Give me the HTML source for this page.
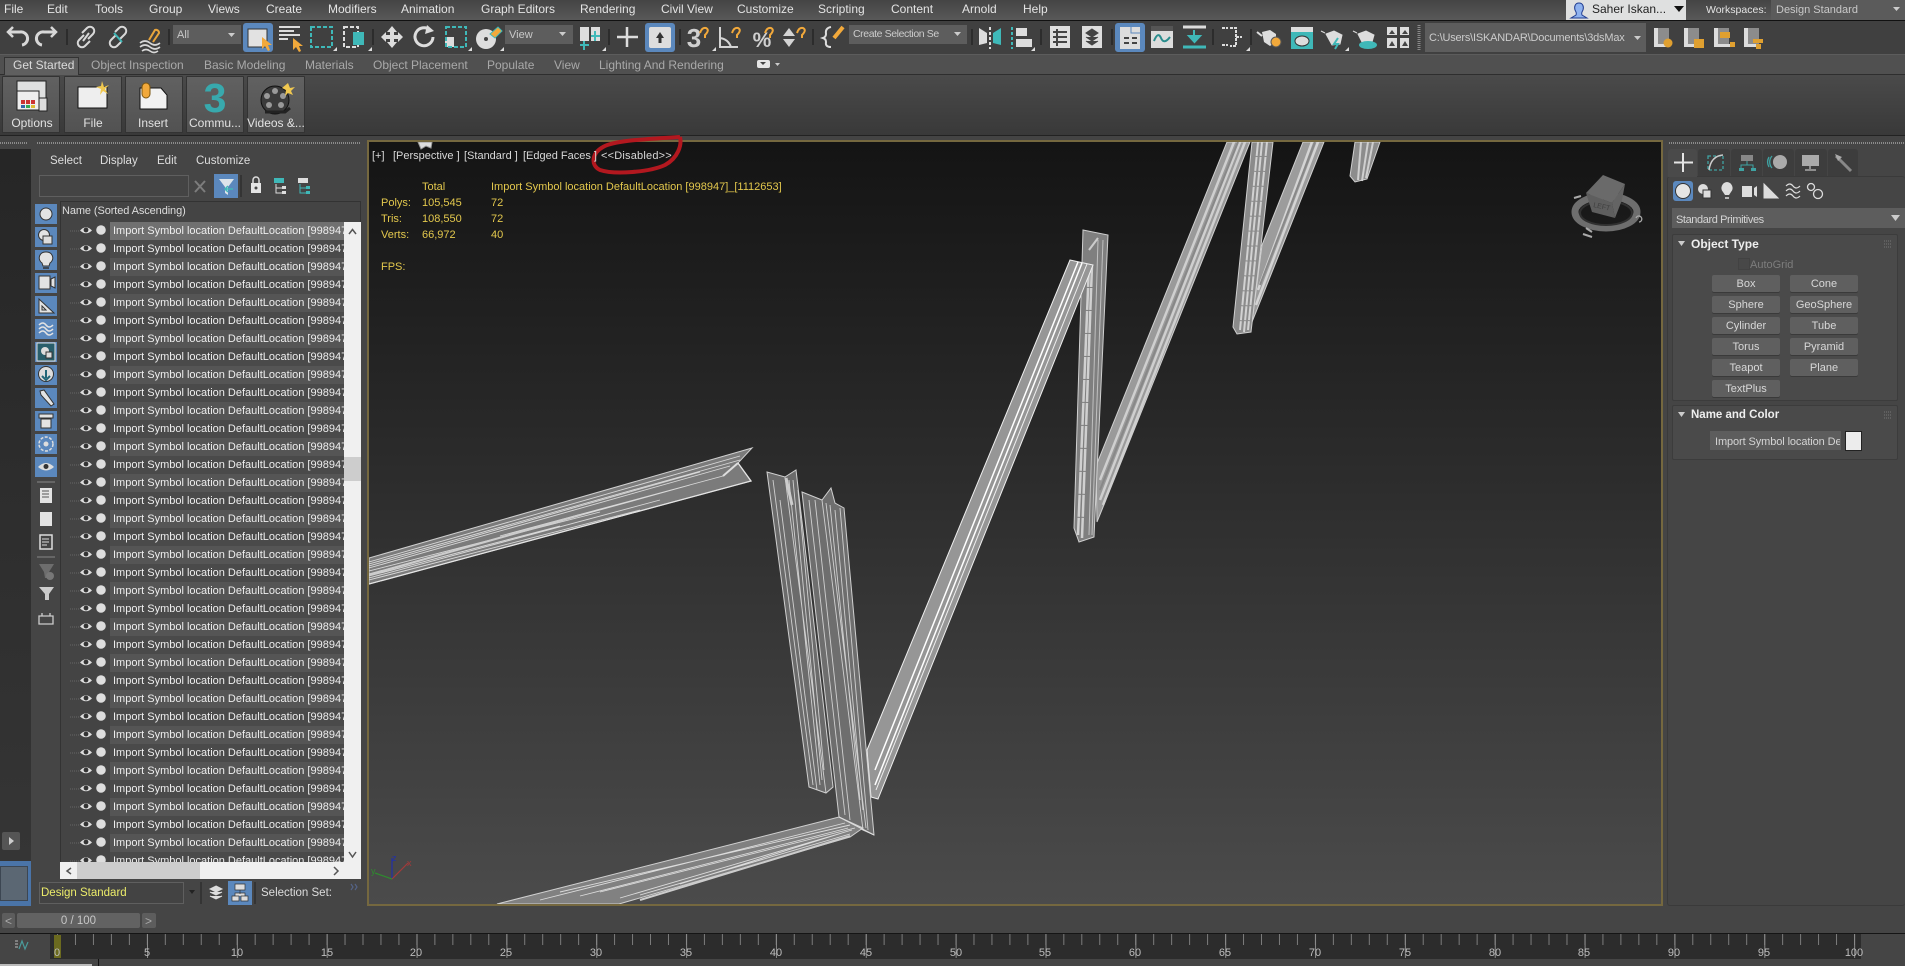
<!DOCTYPE html>
<html><head><meta charset="utf-8"><title>3ds Max</title>
<style>
html,body{margin:0;padding:0;width:1905px;height:966px;overflow:hidden;background:#454545}
body{position:relative;font-family:"Liberation Sans",sans-serif;font-size:12px;color:#ddd}
.b,.t{position:absolute}
.t{white-space:nowrap;line-height:14px}
.m .t{color:#e4e4e4;top:2px}
.rt .t{color:#a9a9a9;top:58px}
.rb{position:absolute;top:76px;width:58px;height:57px;background:linear-gradient(#616161,#525252);border:1px solid #333;box-sizing:border-box;border-radius:1px}
.rl{color:#e2e2e2;top:116px;width:60px;text-align:center}
.dd{position:absolute;background:#5d5d5d;color:#c9c9c9}
.y .t{color:#e3c84d;font-size:11px}
.v .t{color:#d8d8d8;font-size:11px;top:149px}
.btn{position:absolute;width:68px;height:17px;background:#5f5f5f;border-radius:2px;color:#d8d8d8;font-size:11px;line-height:18px;text-align:center;box-shadow:0 1px 0 #3a3a3a}
#list{position:absolute;left:110px;top:222px;width:234px;height:640px;overflow:hidden;font-size:11px;color:#eee;line-height:19px}
#list div{height:18px;padding-left:3px;white-space:nowrap;background:#4a4a4a;overflow:hidden}
#list div:nth-child(odd){background:#555}
#list div:first-child{background:#707070}
</style></head><body>
<!-- backgrounds -->
<div class="b" style="left:0;top:0;width:1905px;height:20px;background:linear-gradient(#444,#585858)"></div>
<div class="b" style="left:0;top:20px;width:1905px;height:1px;background:#111"></div>
<div class="b" style="left:0;top:21px;width:1905px;height:34px;background:#404040;border-bottom:1px solid #5c5c5c;box-sizing:border-box"></div>
<div class="b" style="left:0;top:55px;width:1905px;height:20px;background:#505050;border-bottom:1px solid #2e2e2e;box-sizing:border-box"></div>
<div class="b" style="left:0;top:75px;width:1905px;height:60px;background:linear-gradient(#4a4a4a,#393939)"></div>
<div class="b" style="left:0;top:135px;width:1905px;height:1px;background:#222"></div>
<div class="b" style="left:0;top:136px;width:1905px;height:4px;background:#444"></div>
<div class="b" style="left:4px;top:57px;width:75px;height:18px;background:#5f5f5f;border:1px solid #333;border-bottom:0;box-sizing:border-box"></div>
<div class="rb" style="left:2px"></div><div class="rb" style="left:64px"></div><div class="rb" style="left:125px"></div><div class="rb" style="left:186px"></div><div class="rb" style="left:247px"></div>
<div class="b" style="left:0;top:149px;width:31px;height:712px;background:linear-gradient(#262626,#353535)"></div>
<div class="b" style="left:0;top:861px;width:31px;height:45px;background:#4a74a8"></div>
<div class="b" style="left:0;top:866px;width:28px;height:35px;background:#5b6773;border:1px solid #3c4652;box-sizing:border-box"></div>
<div class="b" style="left:2px;top:832px;width:18px;height:18px;background:#555;border-radius:2px"></div>
<div class="b" style="left:39px;top:175px;width:150px;height:22px;border:1px solid #5f5f5f;box-sizing:border-box;background:#444"></div>
<div class="b" style="left:214px;top:174px;width:24px;height:24px;background:#5b88bd"></div>
<div class="b" style="left:60px;top:201px;width:301px;height:21px;background:#444;border:1px solid #333;border-bottom:0;box-sizing:border-box"></div>
<div class="b" style="left:60px;top:222px;width:50px;height:640px;background:#444;border-left:1px solid #333;box-sizing:border-box"></div>
<div class="b" style="left:344px;top:222px;width:17px;height:640px;background:#f0f0f0"></div>
<div class="b" style="left:344px;top:457px;width:17px;height:24px;background:#cdcdcd"></div>
<div class="b" style="left:60px;top:862px;width:301px;height:17px;background:#f0f0f0"></div>
<div class="b" style="left:77px;top:862px;width:123px;height:17px;background:#cdcdcd"></div>
<div id="list">
<div>Import Symbol location DefaultLocation [998947]_[1112653]</div><div>Import Symbol location DefaultLocation [998947]_[1112653]</div><div>Import Symbol location DefaultLocation [998947]_[1112653]</div><div>Import Symbol location DefaultLocation [998947]_[1112653]</div><div>Import Symbol location DefaultLocation [998947]_[1112653]</div><div>Import Symbol location DefaultLocation [998947]_[1112653]</div>
<div>Import Symbol location DefaultLocation [998947]_[1112653]</div><div>Import Symbol location DefaultLocation [998947]_[1112653]</div><div>Import Symbol location DefaultLocation [998947]_[1112653]</div><div>Import Symbol location DefaultLocation [998947]_[1112653]</div><div>Import Symbol location DefaultLocation [998947]_[1112653]</div><div>Import Symbol location DefaultLocation [998947]_[1112653]</div>
<div>Import Symbol location DefaultLocation [998947]_[1112653]</div><div>Import Symbol location DefaultLocation [998947]_[1112653]</div><div>Import Symbol location DefaultLocation [998947]_[1112653]</div><div>Import Symbol location DefaultLocation [998947]_[1112653]</div><div>Import Symbol location DefaultLocation [998947]_[1112653]</div><div>Import Symbol location DefaultLocation [998947]_[1112653]</div>
<div>Import Symbol location DefaultLocation [998947]_[1112653]</div><div>Import Symbol location DefaultLocation [998947]_[1112653]</div><div>Import Symbol location DefaultLocation [998947]_[1112653]</div><div>Import Symbol location DefaultLocation [998947]_[1112653]</div><div>Import Symbol location DefaultLocation [998947]_[1112653]</div><div>Import Symbol location DefaultLocation [998947]_[1112653]</div>
<div>Import Symbol location DefaultLocation [998947]_[1112653]</div><div>Import Symbol location DefaultLocation [998947]_[1112653]</div><div>Import Symbol location DefaultLocation [998947]_[1112653]</div><div>Import Symbol location DefaultLocation [998947]_[1112653]</div><div>Import Symbol location DefaultLocation [998947]_[1112653]</div><div>Import Symbol location DefaultLocation [998947]_[1112653]</div>
<div>Import Symbol location DefaultLocation [998947]_[1112653]</div><div>Import Symbol location DefaultLocation [998947]_[1112653]</div><div>Import Symbol location DefaultLocation [998947]_[1112653]</div><div>Import Symbol location DefaultLocation [998947]_[1112653]</div><div>Import Symbol location DefaultLocation [998947]_[1112653]</div><div>Import Symbol location DefaultLocation [998947]_[1112653]</div>
</div>
<!-- viewport -->
<div class="b" style="left:367px;top:140px;width:1296px;height:766px;box-sizing:border-box;border:2px solid #75683f;background:linear-gradient(#141414,#4b4b4b)"></div>
<!-- bottom controls -->
<div class="b" style="left:39px;top:882px;width:145px;height:22px;border:1px solid #5f5f5f;box-sizing:border-box;background:#434343"></div>
<div class="b" style="left:228px;top:881px;width:24px;height:24px;background:#5b88bd"></div>
<div class="b" style="left:2px;top:913px;width:13px;height:15px;background:#5d5d5d;border-radius:2px"></div>
<div class="b" style="left:17px;top:913px;width:123px;height:15px;background:#626262;border-radius:2px"></div>
<div class="b" style="left:142px;top:913px;width:14px;height:15px;background:#5d5d5d;border-radius:2px"></div>
<div class="b" style="left:0;top:933px;width:1905px;height:1px;background:#151515"></div>
<div class="b" style="left:50px;top:934px;width:1811px;height:25px;background:#2c2c2c"></div>
<div class="b" style="left:0;top:964px;width:92px;height:2px;background:#bbb"></div>
<div class="b" style="left:98px;top:959px;width:1px;height:7px;background:#111"></div>
<!-- dropdowns -->
<div class="dd" style="left:173px;top:25px;width:68px;height:19px"></div>
<div class="dd" style="left:505px;top:25px;width:68px;height:19px"></div>
<div class="dd" style="left:849px;top:25px;width:118px;height:19px"></div>
<div class="dd" style="left:1425px;top:23px;width:221px;height:29px"></div>
<div class="b" style="left:243px;top:23px;width:30px;height:29px;background:#5b88bd;border-radius:3px"></div>
<div class="b" style="left:645px;top:23px;width:30px;height:29px;background:#5b88bd;border-radius:3px"></div>
<div class="b" style="left:649px;top:27px;width:22px;height:21px;background:#ddd;border-radius:2px"></div>
<div class="b" style="left:1115px;top:23px;width:30px;height:29px;background:#5b88bd;border-radius:3px"></div>
<div class="b" style="left:1566px;top:0;width:120px;height:20px;background:#dfe0e0"></div>
<div class="b" style="left:1771px;top:0;width:134px;height:20px;background:#5b5b5b"></div>
<!-- command panel -->
<div class="b" style="left:1667px;top:176px;width:238px;height:730px;border:1px solid #3a3a3a;border-right:0;border-radius:3px;box-sizing:border-box;background:#454545"></div>
<div class="b" style="left:1668px;top:149px;width:29px;height:28px;background:#4a4a4a;border-radius:3px 3px 0 0"></div>
<div class="b" style="left:1698px;top:149px;width:32px;height:27px;background:#3d3d3d;border-radius:3px 3px 0 0"></div>
<div class="b" style="left:1731px;top:149px;width:31px;height:27px;background:#3d3d3d;border-radius:3px 3px 0 0"></div>
<div class="b" style="left:1763px;top:149px;width:31px;height:27px;background:#3d3d3d;border-radius:3px 3px 0 0"></div>
<div class="b" style="left:1795px;top:149px;width:32px;height:27px;background:#3d3d3d;border-radius:3px 3px 0 0"></div>
<div class="b" style="left:1828px;top:149px;width:30px;height:27px;background:#3d3d3d;border-radius:3px 3px 0 0"></div>
<div class="b" style="left:1673px;top:181px;width:20px;height:20px;background:#5b88bd;border-radius:3px"></div>
<div class="dd" style="left:1672px;top:208px;width:233px;height:20px"></div>
<div class="b" style="left:1672px;top:234px;width:226px;height:167px;background:#4a4a4a;border:1px solid #3c3c3c;box-sizing:border-box;border-radius:2px"></div>
<div class="b" style="left:1672px;top:405px;width:226px;height:55px;background:#4a4a4a;border:1px solid #3c3c3c;box-sizing:border-box;border-radius:2px"></div>
<div class="b" style="left:1738px;top:258px;width:10px;height:10px;background:#484848;border:1px solid #424242"></div>
<div class="dd" style="left:1710px;top:431px;width:131px;height:19px"></div>
<div class="b" style="left:1845px;top:431px;width:17px;height:20px;background:#ececec;border:1px solid #222;box-sizing:border-box"></div>

<svg class="b" style="left:0;top:0" width="1905" height="966" viewBox="0 0 1905 966" fill="none">
<defs>
<clipPath id="vp"><rect x="369" y="142" width="1292" height="762"/></clipPath>
<pattern id="pr" patternUnits="userSpaceOnUse" x="60" y="222" width="50" height="18">
<path d="M10 9h9" stroke="#666" stroke-dasharray="1 1"/>
<path d="M20 8.5Q26 2 32 8.5Q26 14 20 8.5Z" fill="#ddd"/><circle cx="26" cy="8" r="2.4" fill="#333"/><circle cx="41" cy="8" r="4.8" fill="#ddd"/>
</pattern>
</defs>
<rect x="61" y="222" width="49" height="640" fill="url(#pr)"/>
<!-- dotted grips -->
<g stroke="#8a8a8a" stroke-width="2" stroke-dasharray="1 1"><path d="M0 143H28M37 143H360M1669 143H1905"/><path d="M1419 25V50" stroke-width="3"/></g>
<!-- toolbar icons -->
<g stroke="#d8d8d8" stroke-width="3">
<path d="M9 32H20A6.5 6.5 0 0 1 22 45"/><path d="M13 27L8 32L13 37" stroke-width="2.5"/>
<path d="M55 32H44A6.5 6.5 0 0 0 42 45"/><path d="M51 27L56 32L51 37" stroke-width="2.5"/>
<g stroke-width="2"><path d="M84 35L79 40A4 4 0 0 0 85 46L90 41M88 39L93 34A4 4 0 0 0 87 28L82 33M83 41L89 33"/></g>
<g stroke-width="2"><path d="M116 35L111 40A4 4 0 0 0 117 46L121 42M120 39L125 34A4 4 0 0 0 119 28L115 32"/><path d="M114 33L122 42" stroke="#3fb8b8"/></g>
<g stroke-width="1.6"><path d="M140 43Q145 39 150 43T160 43M140 47Q145 43 150 47T160 47M142 51Q146 48 150 51T158 51"/><path d="M149 40L155 30A3 3 0 0 1 159 33L153 42" stroke="#e8a53c" stroke-width="2"/></g>
</g>
<path d="M67 29V45M169 29V45M373 29V45M609 29V45M680 29V45M813 29V45M972 29V45M1041 29V45M1112 29V45M1213 29V45M1251 29V45" stroke="#181818"/>
<!-- select -->
<rect x="248" y="29" width="19" height="18" fill="#e2e2e2" stroke="#333"/>
<path d="M262 37L262 49L265 46L268 51L270 50L268 45L272 45Z" fill="#f2a93b"/>
<path d="M279 27H300M279 31H294M279 35H300M279 39H288" stroke="#ddd" stroke-width="2"/><path d="M293 38V50L296 47L299 52L301 51L299 46L303 46Z" fill="#f2a93b"/>
<rect x="311" y="27" width="21" height="20" stroke="#3fb8b8" stroke-width="2" stroke-dasharray="4 2"/>
<rect x="344" y="27" width="14" height="20" stroke="#ddd" stroke-width="2" stroke-dasharray="4 2"/><rect x="353" y="32" width="11" height="13" fill="#3fb8b8"/>
<path d="M392 26L397 32H394V35H398V32L403 37L398 42V39H394V42H397L392 48L387 42H390V39H386V42L381 37L386 32V35H390V32H387Z" fill="#ddd"/>
<path d="M430 30A9 9 0 1 0 433 37" stroke="#ddd" stroke-width="3"/><path d="M427 25L434 31L425 34Z" fill="#ddd"/>
<rect x="445" y="37" width="9" height="10" fill="#ddd"/><rect x="446" y="27" width="20" height="20" stroke="#3fb8b8" stroke-width="2" stroke-dasharray="4 2"/>
<circle cx="486" cy="39" r="10" fill="#ddd"/><circle cx="486" cy="39" r="2" fill="#444"/><path d="M490 34L498 27L502 31L495 38Z" fill="#f2a93b" stroke="#3fb8b8"/>
<rect x="580" y="27" width="9" height="14" fill="#ddd"/><path d="M584 41V50M580 45H589" stroke="#3fb8b8" stroke-width="2"/><rect x="591" y="27" width="9" height="14" fill="#ddd"/><path d="M595 31V41M591 36H600" stroke="#3fb8b8" stroke-width="2"/>
<path d="M617 37H638M627 27V47" stroke="#ddd" stroke-width="2.5"/>
<path d="M656 38L660 32L664 38H661.5V43H658.5V38Z" fill="#333"/>
<text x="694" y="47" font-family="Liberation Sans" font-weight="700" font-size="26" text-anchor="middle" fill="#cfcfcf">3</text>
<text x="762" y="47" font-family="Liberation Sans" font-weight="700" font-size="21" text-anchor="middle" fill="#cfcfcf">%</text>
<g stroke="#f2a93b" stroke-width="2"><path d="M700 33Q702 27 706 28Q710 30 705 35V38M732 33Q734 27 738 28Q742 30 737 35V38M765 33Q767 27 771 28Q775 30 770 35V38M797 33Q799 27 803 28Q807 30 802 35V38"/></g>
<path d="M720 27V47H738M720 38Q728 39 731 47" stroke="#d4d4d4" stroke-width="2"/>
<path d="M789 28L795 36H783ZM789 47L795 39H783Z" fill="#d4d4d4"/>
<path d="M831 27Q825 28 826 34Q826 37 823 38Q826 39 826 42Q825 47 831 47" stroke="#ddd" stroke-width="2"/><path d="M834 38L843 27" stroke="#f2a93b" stroke-width="4"/>
<path d="M990 27V49" stroke="#ddd" stroke-width="2" stroke-dasharray="3 2"/><path d="M979 28L987 33V43L979 45Z" fill="#ddd"/><path d="M1001 28L993 33V43L1001 45Z" fill="#3fb8b8"/>
<path d="M1012 27V49" stroke="#3fb8b8" stroke-width="2" stroke-dasharray="3 2"/><rect x="1016" y="28" width="11" height="8" fill="#ddd"/><rect x="1016" y="39" width="16" height="8" fill="#ddd"/>
<rect x="1050" y="26" width="20" height="22" fill="#ddd"/><path d="M1053 32H1067M1053 37H1067M1053 42H1067M1057 29V46" stroke="#444" stroke-width="2"/>
<rect x="1082" y="26" width="20" height="22" fill="#ddd"/><path d="M1092 29L1098 33L1092 37L1086 33ZM1086 37L1092 41L1098 37M1086 41L1092 45L1098 41" fill="#444" stroke="#444"/>
<rect x="1120" y="27" width="20" height="22" fill="#ddd"/><path d="M1124 38H1129M1132 38H1137M1124 43H1129M1132 43H1137" stroke="#444" stroke-width="2"/><path d="M1131 27V33H1140" stroke="#5b88bd"/>
<rect x="1151" y="26" width="22" height="22" fill="#ddd"/><rect x="1151" y="26" width="22" height="5" fill="#555"/><path d="M1154 41Q1158 31 1161 38T1170 37" stroke="#2a8d8d" stroke-width="2"/>
<path d="M1183 47H1206" stroke="#3fb8b8" stroke-width="3"/><path d="M1194 30V38M1189 36H1200L1194.5 42Z" stroke="#3fb8b8" fill="#3fb8b8" stroke-width="2"/><path d="M1183 27H1206" stroke="#ddd" stroke-width="3"/>
<path d="M1222 28H1228M1222 45H1228M1236 37H1242M1230 28H1236V46H1230" stroke="#ddd" stroke-width="2" stroke-dasharray="3 1"/>
<!-- teapots -->
<g><path d="M1262 32L1270 30L1276 34V42L1270 46L1264 42Z" fill="#ddd"/><path d="M1262 36L1257 32" stroke="#ddd" stroke-width="2"/><circle cx="1276" cy="42" r="5" fill="#f2a93b" stroke="#555"/></g>
<rect x="1291" y="27" width="22" height="22" fill="#3fb8b8"/><rect x="1291" y="27" width="22" height="5" fill="#ddd"/><ellipse cx="1302" cy="41" rx="7" ry="5" fill="#ddd" stroke="#333"/>
<path d="M1326 34L1334 31L1342 35L1340 44L1332 45Z M1325 33L1321 31" fill="#ddd" stroke="#ddd"/><path d="M1338 38L1334 44H1338L1335 49" stroke="#3fb8b8" stroke-width="2"/>
<path d="M1358 34L1366 31L1374 35L1372 42L1362 42Z M1357 33L1353 31" fill="#ddd" stroke="#ddd"/><ellipse cx="1368" cy="45" rx="9" ry="4" fill="#3fb8b8"/>
<path d="M1387 27H1397V35H1387ZM1400 27H1409V35H1400ZM1387 38H1397V48H1387ZM1400 38H1409V48H1400Z" fill="#ddd"/>
<path d="M1389 34L1392 30L1395 34ZM1402 34L1405 30L1408 34ZM1389 46L1392 41L1395 46ZM1402 46L1405 41L1408 46Z" fill="#444"/>
<!-- project icons -->
<g fill="#8c8c8c"><path d="M1657 28H1669V44H1657Z"/><path d="M1687 28H1699V44H1687Z"/><path d="M1717 28H1729V44H1717Z"/><path d="M1747 28H1759V44H1747Z"/></g>
<g fill="#ddd"><path d="M1654 28H1658V44H1670V47H1654Z"/><path d="M1684 28H1688V44H1700V47H1684Z"/><path d="M1714 28H1718V44H1730V47H1714Z"/><path d="M1744 28H1748V44H1760V47H1744Z"/></g>
<g fill="#e0a030"><circle cx="1668" cy="43" r="4.5"/><rect x="1694" y="39" width="10" height="9"/><path d="M1720 32H1730V38H1720ZM1730 42H1735V47H1730Z"/><path d="M1753 39H1763V43H1753ZM1756 44H1761V49H1756Z"/></g>
<!-- flyout corners -->
<path d="M333 51h4v-4zM368 51h4v-4zM468 51h4v-4zM500 51h4v-4zM602 51h4v-4zM712 51h4v-4zM1031 51h4v-4zM1246 51h4v-4zM1345 51h4v-4z" fill="#ddd"/>
<!-- dropdown arrows -->
<path d="M228 33h7l-3.500 4zM559 32h7l-3.500 4zM954 32h7l-3.500 4zM1634 36h7l-3.500 4zM1893 7h7l-3.500 4zM1891 215h9l-4.500 6z" fill="#ccc"/>
<path d="M1674 6h10l-5 6z" fill="#111"/>
<path d="M1579 3C1575 3 1574 7 1575 10C1576 12 1577 13 1576 15L1571 18H1587L1582 15C1581 13 1582 12 1583 10C1584 7 1583 3 1579 3Z" fill="#8fb2ef" stroke="#223e92"/>
<path d="M775 63h5l-2.500 3z" fill="#ccc"/>
<rect x="757" y="60" width="13" height="8" rx="2" fill="#e5e5e5"/><path d="M760 62h6l-3 3z" fill="#444"/>
<!-- ribbon icons -->
<rect x="17" y="81" width="29" height="27" fill="#dfe0e0" stroke="#222"/><rect x="17" y="91" width="22" height="19" fill="#eee" stroke="#222"/><path d="M21 100h4v4h-4zM26 100h4v4h-4zM31 100h4v4h-4z" fill="#c33"/><path d="M21 105h4v3h-4z" fill="#36a"/><path d="M26 105h4v3h-4z" fill="#3a5"/><path d="M31 105h4v3h-4z" fill="#db3"/>
<rect x="39" y="98" width="8" height="13" fill="#ddd" stroke="#222"/>
<rect x="78" y="87" width="29" height="21" fill="#eee" stroke="#111"/><path d="M102 81L104 87L109 85L105 89L108 94L103 91L100 95L101 89L96 87L101 86Z" fill="#f0c850"/>
<path d="M140 88H161L167 95V109H140Z" fill="#f2f2f2" stroke="#111"/><rect x="142" y="83" width="8" height="15" rx="4" fill="#f2a93b" stroke="#7a5510"/>
<circle cx="275" cy="100" r="14" fill="#3b3b3b" stroke="#111"/><g fill="#999"><circle cx="275" cy="91" r="3"/><circle cx="267" cy="96" r="3"/><circle cx="283" cy="96" r="3"/><circle cx="269" cy="105" r="3"/><circle cx="281" cy="105" r="3"/></g><path d="M288 83L290 88L295 87L291 91L293 95L288 93L285 96L286 90L282 88Z" fill="#f0c850"/><path d="M265 112L285 112L290 108" stroke="#222" stroke-width="3"/>
<text x="215" y="112" font-family="Liberation Sans" font-weight="700" font-size="41" text-anchor="middle" fill="#38a9ad">3</text>
<!-- outliner toolbar -->
<path d="M195 181L205 192M205 181L195 192" stroke="#7d7d7d" stroke-width="2"/>
<path d="M219 179H234L228 187V195L225 193V187Z" fill="#dce4ea"/><path d="M225 189h8M228 186l-3 3 3 3" stroke="#3fb8b8" stroke-width="1.5"/>
<path d="M241 175V197" stroke="#222"/>
<rect x="251" y="183" width="10" height="10" fill="#e5e5e5"/><path d="M253 183V180A3 3 0 0 1 259 180V183" stroke="#ddd" stroke-width="1.5"/><circle cx="256" cy="188" r="1.5" fill="#444"/>
<rect x="274" y="178" width="10" height="5" fill="#3fb8b8"/><path d="M276 184V193H282M276 188H282" stroke="#ddd"/><rect x="282" y="186" width="4" height="3" fill="#ddd"/><rect x="282" y="191" width="4" height="3" fill="#ddd"/>
<rect x="298" y="178" width="10" height="5" fill="#ddd"/><path d="M300 184V193H306M300 188H306" stroke="#3fb8b8"/><rect x="306" y="186" width="4" height="3" fill="#3fb8b8"/><rect x="306" y="191" width="4" height="3" fill="#3fb8b8"/>
<!-- outliner side buttons -->
<path d="M35 204h22v20H35zM35 227h22v20H35zM35 250h22v20H35zM35 273h22v20H35zM35 296h22v20H35zM35 319h22v20H35zM35 342h22v20H35zM35 365h22v20H35zM35 388h22v20H35zM35 411h22v20H35zM35 434h22v20H35zM35 457h22v20H35z" fill="#5b88bd"/>
<circle cx="46" cy="214" r="6" fill="#e3e3e3" stroke="#333"/>
<circle cx="44" cy="235" r="5.5" fill="#e3e3e3" stroke="#333"/><rect x="43" y="236" width="9" height="8" fill="#ddd" stroke="#333"/>
<path d="M46 252A6 6 0 0 1 50 263L49 266H43L42 263A6 6 0 0 1 46 252Z" fill="#e3e3e3" stroke="#333"/><path d="M43 268h6" stroke="#333" stroke-width="1.5"/>
<path d="M39 276h11v13H39zM51 279l4-2v11l-4-2z" fill="#e3e3e3" stroke="#333"/>
<path d="M39 299V313H54L39 299ZM42 306V310H46Z" fill="#e3e3e3" stroke="#333"/>
<path d="M39 325Q43 321 46 325T53 325M39 329Q43 325 46 329T53 329M39 333Q43 329 46 333T53 333" stroke="#e3e3e3" stroke-width="1.5"/>
<rect x="37" y="343" width="18" height="18" fill="#295e6b" stroke="#ddd"/><circle cx="45" cy="351" r="4" fill="#ddd"/><rect x="46" y="352" width="6" height="6" fill="#ddd" stroke="#333"/>
<circle cx="46" cy="374" r="7.5" fill="#ddd" stroke="#333"/><path d="M46 370V378M42 376L46 380L50 376" stroke="#267" stroke-width="2"/>
<path d="M40 391L44 390L54 404L51 406L41 395Z" fill="#e3e3e3" stroke="#333"/>
<path d="M39 414H53V418H39ZM41 419H51V428H41Z" fill="#e3e3e3" stroke="#333"/>
<circle cx="46" cy="444" r="7" stroke="#ddd" stroke-width="1.5" stroke-dasharray="3 1.5"/><circle cx="46" cy="444" r="2.5" fill="#ddd"/>
<path d="M38 467Q46 459 54 467Q46 474 38 467Z" fill="#ddd"/><circle cx="46" cy="466.5" r="2.5" fill="#333"/>
<path d="M37 482H55M37 557H55" stroke="#888"/>
<rect x="40" y="488" width="12" height="15" fill="#e3e3e3"/><path d="M42 491h7M42 494h7M42 497h7" stroke="#555"/>
<rect x="40" y="512" width="12" height="14" fill="#e3e3e3"/>
<rect x="40" y="535" width="12" height="14" stroke="#ddd" stroke-width="1.5"/><path d="M42 539h7M42 542h7M42 545h5" stroke="#ddd"/>
<path d="M39 564H54L49 572V578H45L44 572Z" fill="#6d6d6d"/><circle cx="50" cy="576" r="4" fill="#777"/>
<path d="M39 587H54L49 594V600H45V594Z" fill="#ccc"/>
<path d="M39 616h14v8H39zM42 613v3M50 613v3" stroke="#ccc" stroke-width="1.3"/>
<!-- scrollbars arrows -->
<path d="M349 234L352.5 229.5L356 234M349 852L352.5 857L356 852M71 868L67 871L71 874M334 867L338 871L334 875" stroke="#555" stroke-width="1.5"/>
<path d="M9 837L14 841L9 845Z" fill="#ccc"/>
<!-- bottom bar -->
<path d="M189 890h6l-3 4z" fill="#222"/><path d="M201 882V904M255 882V904" stroke="#222"/>
<path d="M216 886L222 889L216 892L210 889ZM210 892L216 895L222 892M210 896L216 899L222 896" fill="#ddd" stroke="#ddd"/>
<path d="M235 884h10v6h-10zM232 896h7v5h-7zM241 896h7v5h-7z M240 890V894M235 896V893H245V896" fill="#ddd" stroke="#333" stroke-width=".7"/>
<path d="M351 884l2 3-2 3M355 884l2 3-2 3" stroke="#546387" stroke-width="1.2"/>
<!-- viewport geometry -->
<g clip-path="url(#vp)" stroke="#d0d0d0" stroke-width="1">
<path d="M1355 142H1380L1367 179L1355 182L1350 176Z" fill="#8c8c8c"/><path d="M1361 142L1358 180M1368 142L1362 181M1373 142L1366 178" stroke-width="2" stroke="#cfcfcf"/>
<path d="M1303 142H1324L1252 322L1262 245Z" fill="#9c9c9c"/><path d="M1312 142L1258 290M1318 142L1256 305" stroke="#d4d4d4" stroke-width="2.5"/><path d="M1315 142L1260 285" stroke="#888" stroke-width="2"/>
<path d="M1252 142H1273L1251 332L1237 334L1233 327Z" fill="#8b8b8b"/><path d="M1258 142L1240 330M1262 142L1244 332M1267 142L1248 330" stroke="#d2d2d2" stroke-width="2" stroke-dasharray="14 1"/>
<path d="M1227 142H1250L1097 522L1096 466Z" fill="#9a9a9a"/><path d="M1234 142L1100 480M1240 142L1100 500M1245 142L1103 505" stroke="#cfcfcf" stroke-width="2.5"/><path d="M1238 142L1100 490" stroke="#888" stroke-width="2"/>
<path d="M1083 230L1108 235L1094 537L1079 542L1074 528Z" fill="#7f7f7f"/><path d="M1089 265L1078 535M1092 265L1082 538" stroke="#d0d0d0" stroke-width="2.5" stroke-dasharray="22 1"/><path d="M1098 240L1089 535M1103 240L1092 535" stroke="#c0c0c0"/><path d="M1089 250L1098 238" stroke="#ccc" stroke-width="2"/>
<path d="M1070 260L1093 265L878 799L871 797L867 750Z" fill="#969696" stroke="#efefef"/><path d="M1078 262L875 770M1082 263L875 785" stroke="#fff" stroke-width="1.5"/><path d="M1087 264L876 790" stroke="#f0f0f0"/>
<path d="M369 558L752 448L738 463L751 481L369 584Z" fill="#7b7b7b"/>
<path d="M369 562L740 456M369 564L740 460M369 568L730 466M369 571L600 512M369 576L560 526M369 580L640 510M500 536L723 476M369 566L700 472M369 574L690 485M369 578L660 500" stroke="#d8d8d8" stroke-width=".9"/><path d="M369 575L580 515" stroke="#ccc" stroke-width="2"/><path d="M738 463L723 476" stroke="#ddd" stroke-width="2"/>
<path d="M369 584L751 481L738 463" stroke="#e4e4e4" stroke-width="1.3"/>
<path d="M767 472L785 477L796 470L833 787L826 793L809 787Z" fill="#6b6b6b"/><path d="M785 477L826 793M793 480L822 780M789 480L820 785M773 480L813 785M798 490L824 770M780 500L817 790" stroke="#d0d0d0" stroke-width=".9"/><path d="M786 478L792 505" stroke="#ccc" stroke-width="3"/>
<path d="M802 492L822 500L831 488L835 503L844 508L874 835L863 830L839 817Z" fill="#6e6e6e"/><path d="M822 500L863 830M826 503L866 828M830 505L860 800M815 500L850 820M840 508L868 830M835 510L863 810M809 500L845 815" stroke="#d0d0d0" stroke-width=".9"/>
<path d="M497 904L839 817L863 828L850 837L619 904Z" fill="#818181"/><path d="M560 892L850 825M600 892L855 828M640 895L850 834M540 900L845 823M680 884L845 832M580 896L848 828M620 898L852 830" stroke="#dcdcdc" stroke-width=".9"/><path d="M640 900L850 836" stroke="#ccc" stroke-width="2"/>
<path d="M839 817L874 835" stroke="#ddd"/>
<path d="M418 142L432 142L431 148L426 146L421 149Z" fill="#ddd" stroke="#999"/>
</g>
<!-- red annotation -->
<path d="M680 137C650 139 615 140 603 147C592 153 590 165 600 170C615 175 650 172 665 165C678 158 682 145 680 137" stroke="#b3181f" stroke-width="4"/>
<!-- gizmo -->
<path d="M392 879V858" stroke="#2230a8" stroke-width="1.2"/><path d="M392 879L408 863" stroke="#a33a3a" stroke-width="1.2"/><path d="M392 879L375 873" stroke="#2f8a2f" stroke-width="1.2"/>
<text x="392" y="861" font-size="9" fill="#2230a8" font-family="Liberation Sans">z</text><text x="407" y="866" font-size="9" fill="#a33a3a" font-family="Liberation Sans">x</text><text x="371" y="874" font-size="9" fill="#2f8a2f" font-family="Liberation Sans">y</text>
<!-- viewcube -->
<ellipse cx="1606" cy="212" rx="31" ry="16" stroke="#6e6e6e" stroke-width="7"/><ellipse cx="1606" cy="213" rx="26" ry="12" stroke="#303030" stroke-width="2"/>
<path d="M1603 175L1625 184L1612 203L1586 193Z" fill="#6a6a6a"/><path d="M1586 193L1612 203L1615 218L1592 212Z" fill="#5e5e5e"/><path d="M1625 184L1622 200L1615 218L1612 203Z" fill="#646464"/>
<text x="1593" y="207" font-size="7" fill="#3f3f3f" font-family="Liberation Sans" transform="rotate(12 1593 207)">LEFT</text>
<path d="M1574 198L1581 196M1586 228L1592 232M1583 234L1592 237" stroke="#aaa" stroke-width="2"/><path d="M1636 218A3 3 0 1 1 1639 222" stroke="#aaa" stroke-width="1.3"/>
<!-- command panel icons -->
<path d="M1683 153V172M1674 162.5H1693" stroke="#e5e5e5" stroke-width="2"/>
<rect x="1708" y="156" width="15" height="14" stroke="#3fa3a3" stroke-width="1.3" stroke-dasharray="3 2"/><path d="M1709 170Q1711 156 1723 155" stroke="#ccc" stroke-width="1.5"/>
<rect x="1741" y="155" width="12" height="6" fill="#888"/><path d="M1747 161V165M1741 170V165H1753V170" stroke="#3fa3a3"/><rect x="1739" y="168" width="5" height="3" fill="#3fa3a3"/><rect x="1751" y="168" width="5" height="3" fill="#3fa3a3"/>
<circle cx="1780" cy="162" r="7" fill="#aaa"/><path d="M1772 156A9 9 0 0 0 1772 168M1769 157A10 10 0 0 0 1769 167" stroke="#3fa3a3" stroke-width="1.3"/>
<rect x="1802" y="155" width="17" height="11" fill="#aaa"/><path d="M1810 166V169M1805 170H1816" stroke="#aaa" stroke-width="1.5"/>
<path d="M1836 156L1841 161L1851 171" stroke="#888" stroke-width="3"/><path d="M1835 154L1842 157L1838 161Z" fill="#aaa"/>
<circle cx="1683" cy="191" r="7.5" fill="#e5e5e5" stroke="#333"/>
<circle cx="1703" cy="189" r="5" fill="#ddd"/><rect x="1703" y="190" width="8" height="8" fill="#ddd" stroke="#333"/>
<path d="M1727 182A6 6 0 0 1 1731 192L1729 195H1725L1723 192A6 6 0 0 1 1727 182Z" fill="#ddd"/><path d="M1725 198h4" stroke="#ddd" stroke-width="1.5"/>
<path d="M1742 186h10v11h-10zM1754 188l3-2v11l-3-2z" fill="#ddd"/>
<path d="M1764 184V198H1778L1764 184ZM1767 192V195H1771Z" fill="#ddd" stroke="#ddd"/>
<path d="M1786 186Q1790 182 1793 186T1800 186M1786 191Q1790 187 1793 191T1800 191M1786 196Q1790 192 1793 196T1800 196" stroke="#ddd" stroke-width="1.2"/>
<circle cx="1811" cy="187" r="3.5" stroke="#ddd" stroke-width="1.3"/><circle cx="1818" cy="194" r="4.5" stroke="#ddd" stroke-width="1.3"/>
<!-- rollout triangles and grips -->
<path d="M1678 241h7l-3.500 5zM1678 412h7l-3.500 5z" fill="#ccc"/>
<path d="M1884 241h7M1884 244h7M1884 247h7M1884 412h7M1884 415h7M1884 418h7" stroke="#777" stroke-dasharray="1 1"/>
<!-- timeline -->
<path d="M57 939.5H1856" stroke="#7c7c7c" stroke-width="11" stroke-dasharray="1 16.97"/>
<path d="M147 946H1856" stroke="#8a8a8a" stroke-width="24" stroke-dasharray="1 88.85"/>
<rect x="54" y="935" width="7" height="23" fill="#6b6a1f"/>
<g fill="#bdbdbd" font-family="Liberation Sans" font-size="11" text-anchor="middle"><text x="57" y="956">0</text><text x="147" y="956">5</text><text x="237" y="956">10</text><text x="327" y="956">15</text><text x="416" y="956">20</text><text x="506" y="956">25</text><text x="596" y="956">30</text><text x="686" y="956">35</text><text x="776" y="956">40</text><text x="866" y="956">45</text><text x="956" y="956">50</text><text x="1045" y="956">55</text><text x="1135" y="956">60</text><text x="1225" y="956">65</text><text x="1315" y="956">70</text><text x="1405" y="956">75</text><text x="1495" y="956">80</text><text x="1584" y="956">85</text><text x="1674" y="956">90</text><text x="1764" y="956">95</text><text x="1854" y="956">100</text></g>
<path d="M15 941h3M15 944h3M15 947h3" stroke="#bbb"/><path d="M19 949L22 941L25 949L28 942" stroke="#4a9a9a" stroke-width="1.2"/>
</svg>

<!-- text -->
<div class="m">
<span class="t" style="left:4px">File</span><span class="t" style="left:47px">Edit</span><span class="t" style="left:95px">Tools</span><span class="t" style="left:149px">Group</span><span class="t" style="left:208px">Views</span><span class="t" style="left:266px">Create</span><span class="t" style="left:328px">Modifiers</span><span class="t" style="left:401px">Animation</span><span class="t" style="left:481px">Graph Editors</span><span class="t" style="left:580px">Rendering</span><span class="t" style="left:661px">Civil View</span><span class="t" style="left:737px">Customize</span><span class="t" style="left:818px">Scripting</span><span class="t" style="left:891px">Content</span><span class="t" style="left:962px">Arnold</span><span class="t" style="left:1023px">Help</span>
<span class="t" style="left:1592px;color:#222">Saher Iskan...</span><span class="t" style="left:1706px;font-size:10.5px;top:3px">Workspaces:</span><span class="t" style="left:1776px;font-size:11px;top:3px;color:#c9c9c9">Design Standard</span>
</div>
<span class="t" style="left:177px;top:28px;color:#c9c9c9;font-size:11px">All</span>
<span class="t" style="left:509px;top:28px;color:#c9c9c9;font-size:11px">View</span>
<span class="t" style="left:853px;top:27px;color:#ccc;font-size:10.5px;letter-spacing:-.4px">Create Selection Se</span>
<span class="t" style="left:1429px;top:31px;color:#ccc;font-size:11px;letter-spacing:-.2px">C:\Users\ISKANDAR\Documents\3dsMax</span>
<div class="rt">
<span class="t" style="left:13px;color:#dcdcdc">Get Started</span><span class="t" style="left:91px">Object Inspection</span><span class="t" style="left:204px">Basic Modeling</span><span class="t" style="left:305px">Materials</span><span class="t" style="left:373px">Object Placement</span><span class="t" style="left:487px">Populate</span><span class="t" style="left:554px">View</span><span class="t" style="left:599px">Lighting And Rendering</span>
</div>
<span class="t rl" style="left:2px">Options</span><span class="t rl" style="left:63px">File</span><span class="t rl" style="left:123px">Insert</span><span class="t rl" style="left:185px">Commu...</span><span class="t rl" style="left:246px">Videos &amp;...</span>
<span class="t" style="left:50px;top:154px;font-size:11.5px">Select</span><span class="t" style="left:100px;top:154px;font-size:11.5px">Display</span><span class="t" style="left:157px;top:154px;font-size:11.5px">Edit</span><span class="t" style="left:196px;top:154px;font-size:11.5px">Customize</span>
<span class="t" style="left:62px;top:204px;font-size:11px;letter-spacing:-.1px">Name (Sorted Ascending)</span>
<span class="t" style="left:41px;top:886px;color:#ecec6a;font-size:11.5px">Design Standard</span>
<span class="t" style="left:261px;top:886px;font-size:11.5px">Selection Set:</span>
<span class="t" style="left:17px;top:914px;width:123px;text-align:center;color:#c6c6c6;font-size:11.5px">0 / 100</span>
<span class="t" style="left:5px;top:914px;color:#aaa">&lt;</span><span class="t" style="left:145px;top:914px;color:#aaa">&gt;</span>
<div class="v">
<span class="t" style="left:372px">[+]</span><span class="t" style="left:393px">[Perspective ]</span><span class="t" style="left:464px">[Standard ]</span><span class="t" style="left:523px">[Edged Faces ]</span><span class="t" style="left:601px;letter-spacing:.2px">&lt;&lt;Disabled&gt;&gt;</span>
</div>
<div class="y">
<span class="t" style="left:422px;top:180px">Total</span><span class="t" style="left:491px;top:180px">Import Symbol location DefaultLocation [998947]_[1112653]</span>
<span class="t" style="left:381px;top:196px">Polys:</span><span class="t" style="left:422px;top:196px">105,545</span><span class="t" style="left:491px;top:196px">72</span>
<span class="t" style="left:381px;top:212px">Tris:</span><span class="t" style="left:422px;top:212px">108,550</span><span class="t" style="left:491px;top:212px">72</span>
<span class="t" style="left:381px;top:228px">Verts:</span><span class="t" style="left:422px;top:228px">66,972</span><span class="t" style="left:491px;top:228px">40</span>
<span class="t" style="left:381px;top:260px">FPS:</span>
</div>
<span class="t" style="left:1676px;top:213px;color:#d4d4d4;font-size:11px;letter-spacing:-.4px">Standard Primitives</span>
<span class="t" style="left:1691px;top:237px;color:#eee;font-weight:700;font-size:12px">Object Type</span>
<span class="t" style="left:1750px;top:258px;color:#7d7d7d;font-size:11px">AutoGrid</span>
<div class="btn" style="left:1712px;top:275px">Box</div><div class="btn" style="left:1790px;top:275px">Cone</div>
<div class="btn" style="left:1712px;top:296px">Sphere</div><div class="btn" style="left:1790px;top:296px">GeoSphere</div>
<div class="btn" style="left:1712px;top:317px">Cylinder</div><div class="btn" style="left:1790px;top:317px">Tube</div>
<div class="btn" style="left:1712px;top:338px">Torus</div><div class="btn" style="left:1790px;top:338px">Pyramid</div>
<div class="btn" style="left:1712px;top:359px">Teapot</div><div class="btn" style="left:1790px;top:359px">Plane</div>
<div class="btn" style="left:1712px;top:380px">TextPlus</div>
<span class="t" style="left:1691px;top:408px;color:#eee;font-weight:700;font-size:11.5px">Name and Color</span>
<span class="t" style="left:1715px;top:435px;width:125px;overflow:hidden;color:#d4d4d4;font-size:11px;letter-spacing:-.1px">Import Symbol location De</span>
</body></html>
